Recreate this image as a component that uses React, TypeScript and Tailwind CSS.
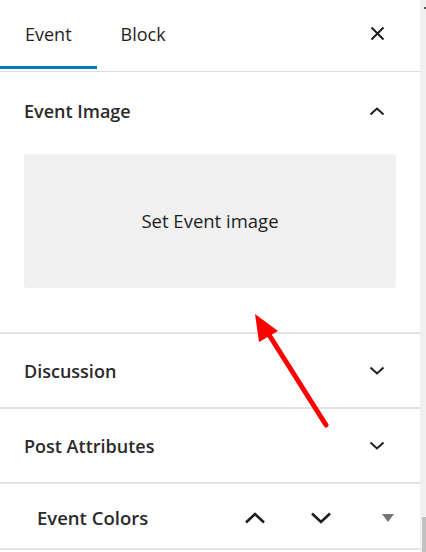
function Chevron({ up, big }: { up?: boolean; big?: boolean }) {
  const w = big ? 22 : 16;
  return (
    <svg width={w} height={big ? 12 : 9} viewBox={big ? "0 0 22 12" : "0 0 16 9"} fill="none">
      {big ? (
        <path d={up ? "M2 10.5 L11 2 L20 10.5" : "M2 1.5 L11 10 L20 1.5"} stroke="#1e1e1e" strokeWidth="2.6" />
      ) : (
        <path d={up ? "M1.5 7.5 L8 1.5 L14.5 7.5" : "M1.5 1.5 L8 7.5 L14.5 1.5"} stroke="#1e1e1e" strokeWidth="2" />
      )}
    </svg>
  );
}

function Divider() {
  return <div className="h-[2px] w-full bg-[#e2e2e2]" />;
}

function PanelRow({ title }: { title: string }) {
  return (
    <div className="flex h-[73px] items-center justify-between pl-6 pr-[35px]">
      <span className="text-[18px] font-semibold leading-6 text-[#2a2a2a]">{title}</span>
      <Chevron />
    </div>
  );
}

export default function App() {
  return (
    <div
      className="relative flex h-[552px] w-[426px] overflow-hidden bg-white"
      style={{ fontFamily: "'Open Sans', 'Noto Sans', sans-serif" }}
    >
      <div className="flex w-[420px] flex-col">
        {/* tabs */}
        <div className="flex h-[71px] items-stretch justify-between">
          <div className="flex">
            <button className="relative flex items-center px-[25px] pb-[3px] text-[18px] leading-6 text-[#1e1e1e]">
              Event
              <span className="absolute bottom-[2px] left-0 h-[3px] w-full bg-[#007cba]" />
            </button>
            <button className="flex items-center px-6 pb-[3px] text-[18px] leading-6 text-[#1e1e1e]">
              Block
            </button>
          </div>
          <div className="flex items-center pb-[4px] pr-[35px]">
            <svg width="15" height="15" viewBox="0 0 15 15">
              <path d="M1.5 1.5 L13.5 13.5 M13.5 1.5 L1.5 13.5" stroke="#1e1e1e" strokeWidth="2" />
            </svg>
          </div>
        </div>
        <div className="h-[1px] w-full bg-[#dddddd]" />

        {/* event image */}
        <div className="flex flex-col px-6 pb-[44px] pt-[27px]">
          <div className="flex items-center justify-between pr-[11px]">
            <span className="text-[18px] font-semibold leading-6 text-[#2a2a2a]">Event Image</span>
            <Chevron up />
          </div>
          <div className="mt-[31px] flex h-[134px] items-center justify-center rounded-[3px] bg-[#f0f0f0]">
            <span className="text-[18.5px] leading-6 text-[#1e1e1e]">Set Event image</span>
          </div>
        </div>
        <Divider />
        <PanelRow title="Discussion" />
        <Divider />
        <PanelRow title="Post Attributes" />
        <Divider />

        {/* event colors */}
        <div className="flex h-[64px] items-center pl-[37px] pt-[3px]">
          <span className="w-[207px] text-[18.5px] font-semibold leading-6 text-[#2a2a2a]">Event Colors</span>
          <Chevron up big />
          <span className="w-[44px]" />
          <Chevron big />
          <span className="w-[50px]" />
          <svg width="12" height="8" viewBox="0 0 12 8">
            <path d="M0 0 H12 L6 8 Z" fill="#757575" />
          </svg>
        </div>
        <Divider />
      </div>

      {/* scrollbar */}
      <div className="relative w-[6px] bg-[#f0f0f0]">
        <div className="absolute left-[4px] top-[7px] h-[2px] w-[2px] bg-[#555]" />
        <div className="absolute bottom-0 left-[2px] right-0 top-[517px] bg-[#c1c1c1]" />
      </div>

      {/* annotation arrow */}
      <svg className="pointer-events-none absolute left-0 top-0" width="426" height="552">
        <line x1="326" y1="425" x2="266" y2="330" stroke="#ff0000" strokeWidth="5" strokeLinecap="round" />
        <polygon points="255,314 259,342 278,331" fill="#ff0000" />
      </svg>
    </div>
  );
}
